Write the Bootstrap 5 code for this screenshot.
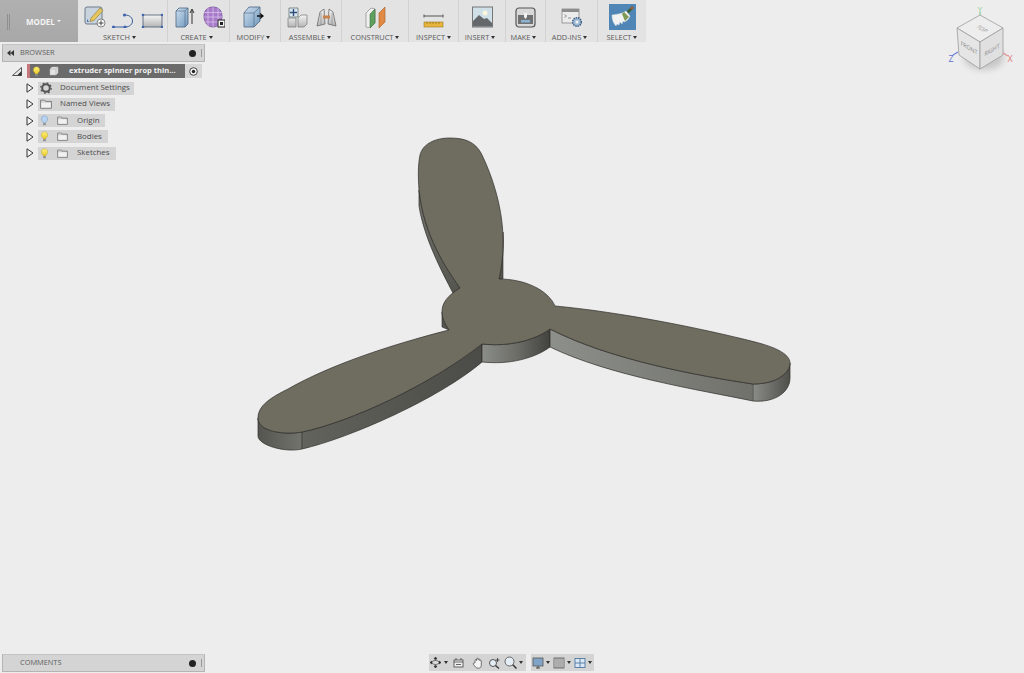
<!DOCTYPE html>
<html lang="en">
<head>
  <meta charset="UTF-8" />
  <meta name="viewport" content="width=device-width, initial-scale=1" />
  <title>Fusion 360 - extruder spinner prop</title>
  <link href="https://cdn.jsdelivr.net/npm/bootstrap@5.3.3/dist/css/bootstrap.min.css" rel="stylesheet" />
  <style>
    body {
      background: #ededed;
      font-family: "Open Sans", "Liberation Sans", sans-serif;
      color: #555;
      overflow: hidden;
    }

    .app { height: 673px; }

    /* toolbar */
    .toolbar { width: 646px; height: 42px; background: #e3e3e3; }
    .mode-tab {
      width: 78px;
      background: linear-gradient(#b0b0b0, #a8a8a8);
      color: #f4f4f4;
      font-size: 8px;
      font-weight: 700;
      padding-left: 26px;
      padding-top: 1px;
    }
    .mode-tab .grip { width: 3px; height: 16px; border-left: 1px solid #8f8f8f; border-right: 1px solid #8f8f8f; margin-left: -19px; margin-right: 16px; }
    .tool-group { border-right: 1px solid #d2d2d2; height: 42px; padding-top: 4px; }
    .tool-group:last-child { border-right: 0; }
    .tool-icons { height: 27px; }
    .tool-label { font-size: 7.4px; line-height: 10px; color: #595959; white-space: nowrap; margin-top: 1px; }
    .tool-label.dropdown-toggle::after { margin-left: 2px; vertical-align: 1px; border-top-width: 3px; border-left-width: 2px; border-right-width: 2px; color: #333; }
    .w-sketch { width: 90px; padding-right: 6px; }
    .w-sketch .tool-icons { margin-left: 7px; gap: 5px; }
    .w-create { width: 62px; padding-right: 4px; }
    .w-create .tool-icons { margin-left: 6px; }
    .w-modify { width: 51px; padding-right: 3px; }
    .w-assemble { width: 61px; padding-right: 2px; }
    .w-assemble .tool-icons { margin-left: 4px; }
    .w-construct { width: 67px; }
    .w-inspect { width: 50px; }
    .w-insert { width: 47px; padding-right: 4px; }
    .w-insert .tool-icons, .w-make .tool-icons { margin-left: 4px; }
    .w-make { width: 40px; padding-right: 4px; }
    .w-addins { width: 52px; padding-right: 4px; }
    .w-addins .tool-icons { margin-left: 5px; }
    .w-select { width: 48px; }
    .selected-tool { width: 27px; height: 26px; background: #4f86b5; }

    /* browser panel */
    .side-panel { width: 203px; margin-left: 2px; }
    .panel-head {
      height: 18px;
      background: #d4d4d4;
      border: 1px solid #b4b4b4;
      border-top-color: #c4c4c4;
      font-size: 7.4px;
      color: #5e5e5e;
      padding: 0 2px 0 4px;
    }
    .browser-head { margin-top: 2px; }
    .browser-title { margin-left: 6px; }
    .panel-head .dot { width: 7px; height: 7px; border-radius: 50%; background: #222; }
    .panel-head .handle { width: 1px; height: 8px; background: #999; margin-left: 5px; }
    .tree { margin-top: 1px; font-size: 7.9px; color: #4d4d4d; }
    .tree-root { height: 16px; margin-left: 10px; margin-top: 1px; margin-bottom: 1px; }
    .root-chip { width: 158px; height: 14px; background: #6b6b6b; border-left: 3px solid #c5757c; color: #f2f2f2; font-weight: 700; margin-left: 5px; padding-left: 2px; }
    .root-chip .name { margin-left: 10px; font-size: 7.5px; white-space: nowrap; }
    .root-end { width: 17px; height: 14px; background: #d6d6d6; }
    .tree-item { height: 16.25px; margin-left: 24px; }
    .chip { height: 13px; background: #d4d4d4; margin-left: 4px; padding-left: 2px; }
    .chip span { white-space: nowrap; }
    .w-doc { width: 96px; } .w-views { width: 77px; } .w-origin { width: 67px; } .w-bodies { width: 70px; } .w-sketches { width: 78px; }
    .label-far { margin-left: 8px; }
    .label-near { margin-left: 9px; }

    /* bottom bar */
    .bottom-row { height: 17px; margin-bottom: 2px; }
    .nav-seg { height: 17px; background: #d4d4d4; }
    .nav-one { width: 97px; margin-left: 224px; }
    .nav-two { width: 63px; margin-left: 5px; padding-left: 1px; }
    .mini-caret { width: 0; height: 0; border-top: 3px solid #333; border-left: 2px solid transparent; border-right: 2px solid transparent; margin: 0 3px 0 2px; }
    .comments-label { margin-left: 13px; }
    .cam-gap { margin-left: 2px; }

    /* free canvas */
    .model { position: absolute; left: 0; top: 0; width: 1024px; height: 673px; pointer-events: none; }
    svg { display: block; flex: none; }
  </style>
</head>
<body>

<!-- shared icons -->
<svg width="0" height="0" class="position-absolute">
  <defs>
    <linearGradient id="bulbY" x1="0" y1="0" x2="0" y2="1"><stop offset="0" stop-color="#fff27a"/><stop offset="1" stop-color="#e8c92c"/></linearGradient>
    <linearGradient id="boxBlue" x1="0" y1="0" x2="1" y2="1"><stop offset="0" stop-color="#cfe0ef"/><stop offset="1" stop-color="#6f97bd"/></linearGradient>
    <linearGradient id="grayBox" x1="0" y1="0" x2="0" y2="1"><stop offset="0" stop-color="#f4f4f4"/><stop offset="1" stop-color="#b5b5b5"/></linearGradient>
    <linearGradient id="sideLeft" gradientUnits="userSpaceOnUse" x1="258" y1="0" x2="482" y2="0"><stop offset="0" stop-color="#555550"/><stop offset=".19" stop-color="#72726c"/><stop offset=".197" stop-color="#63635d"/><stop offset="1" stop-color="#4b4b47"/></linearGradient>
    <linearGradient id="sideHub" gradientUnits="userSpaceOnUse" x1="482" y1="0" x2="550" y2="0"><stop offset="0" stop-color="#8b8d88"/><stop offset=".5" stop-color="#6d6e68"/><stop offset="1" stop-color="#42423e"/></linearGradient>
    <linearGradient id="sideRight" gradientUnits="userSpaceOnUse" x1="550" y1="0" x2="790" y2="0"><stop offset="0" stop-color="#8d8f8a"/><stop offset=".84" stop-color="#70716b"/><stop offset=".846" stop-color="#8a8c87"/><stop offset="1" stop-color="#4f4f4a"/></linearGradient>
    <linearGradient id="sideTop" x1="0" y1="0" x2="0" y2="1"><stop offset="0" stop-color="#75756e"/><stop offset="1" stop-color="#55554f"/></linearGradient>
    <filter id="soft" x="-40%" y="-40%" width="180%" height="180%"><feGaussianBlur stdDeviation="3"/></filter>
    <symbol id="bulbOn" viewBox="0 0 10 12"><path d="M5 .7a3.600 3.600 0 0 0-2 6.600c.4.4.6.9.6 1.400h2.800c0-.5.2-1 .6-1.400A3.600 3.600 0 0 0 5 .7z" fill="url(#bulbY)" stroke="#b89f2a" stroke-width=".5"/><rect x="3.600" y="9" width="2.800" height="2.200" fill="#8b8b8b"/></symbol>
    <symbol id="bulbOff" viewBox="0 0 10 12"><path d="M5 .7a3.600 3.600 0 0 0-2 6.600c.4.4.6.9.6 1.400h2.800c0-.5.2-1 .6-1.400A3.600 3.600 0 0 0 5 .7z" fill="#b6d3f2" stroke="#6f90b5" stroke-width=".5"/><rect x="3.600" y="9" width="2.800" height="2.200" fill="#8b8b8b"/></symbol>
    <symbol id="folder" viewBox="0 0 12 10"><path d="M.6 1.200h4l1 1.200h5.800v6.900H.6z" fill="#f1f1f1" stroke="#555" stroke-width=".7"/><path d="M.6 3h10.800" stroke="#888" stroke-width=".5"/></symbol>
    <symbol id="expand" viewBox="0 0 8 10"><path d="M1 .8 7 5 1 9.200z" fill="#f4f4f4" stroke="#333" stroke-width="1"/></symbol>
  </defs>
</svg>

<div class="app d-flex flex-column position-relative">

  <div class="toolbar d-flex">
    <div class="mode-tab d-flex align-items-center">
      <div class="grip"></div>
      <span class="dropdown-toggle">MODEL</span>
    </div>

    <div class="tool-group w-sketch d-flex flex-column align-items-center">
      <div class="tool-icons d-flex">
        <svg width="22" height="24" viewBox="0 0 22 24"><rect x="1" y="3" width="17" height="17" rx="2" fill="#c9d3dd" stroke="#6c7a88"/><path d="M3 18V15l2 3z" fill="#3f6db0"/><path d="M7 14 16 4l3 2.500-9 10-4 1z" fill="#e6c65a" stroke="#8d7a35" stroke-width=".6"/><circle cx="17" cy="19" r="4" fill="#fff" stroke="#555" stroke-width=".7"/><path d="M17 16.500v5M14.500 19h5" stroke="#444"/></svg>
        <svg width="25" height="24" viewBox="0 0 25 24"><path d="M3 23H14c10 0 10-12 0-12" fill="none" stroke="#3a5f9c" stroke-width="1"/><circle cx="2.500" cy="23" r="1.600" fill="#3f66ad"/><circle cx="14" cy="23" r="1.600" fill="#3f66ad"/><circle cx="13.500" cy="11" r="1.600" fill="#3f66ad"/></svg>
        <svg width="22" height="24" viewBox="0 0 22 24"><rect x="2" y="11" width="19" height="12" fill="url(#grayBox)" stroke="#4d5a70" stroke-width=".8"/><g fill="#3f66ad"><circle cx="2" cy="11" r="1.300"/><circle cx="21" cy="11" r="1.300"/><circle cx="2" cy="23" r="1.300"/><circle cx="21" cy="23" r="1.300"/></g></svg>
      </div>
      <div class="tool-label dropdown-toggle">SKETCH</div>
    </div>

    <div class="tool-group w-create d-flex flex-column align-items-center">
      <div class="tool-icons d-flex gap-2">
        <svg width="20" height="24" viewBox="0 0 20 24"><path d="M1 7 4 4h9v16l-3 3H1z" fill="url(#boxBlue)" stroke="#4d6580" stroke-width=".8"/><path d="M10 7v16M1 7h9l3-3" fill="none" stroke="#4d6580" stroke-width=".6"/><path d="M17 20V6m-2 3 2-4 2 4" fill="none" stroke="#333" stroke-width="1"/></svg>
        <svg width="22" height="24" viewBox="0 0 22 24"><path d="M1 12C1 5 6 3 10 3s9 2 9 9-4 11-9 11-9-4-9-11z" fill="#a77bc9" stroke="#6f4c93" stroke-width=".7"/><path d="M1 8.500h18M1 13h18M2 18h16M5 4v18M10 3v20M15 4v18" stroke="#e6d6f3" stroke-width=".6"/><rect x="15" y="16" width="7" height="7" fill="#f4f4f4" stroke="#222"/><rect x="17" y="18" width="3" height="3" fill="#222"/></svg>
      </div>
      <div class="tool-label dropdown-toggle">CREATE</div>
    </div>

    <div class="tool-group w-modify d-flex flex-column align-items-center">
      <div class="tool-icons">
        <svg width="22" height="24" viewBox="0 0 22 24"><path d="M1 9 6 3h11v14l-6 6H1z" fill="url(#boxBlue)" stroke="#4d6580" stroke-width=".8"/><path d="M11 9v14M1 9h10l6-6" fill="none" stroke="#4d6580" stroke-width=".6"/><path d="M14 12h5m-2-2.500 3 2.500-3 2.500" fill="none" stroke="#111" stroke-width="1.300"/></svg>
      </div>
      <div class="tool-label dropdown-toggle">MODIFY</div>
    </div>

    <div class="tool-group w-assemble d-flex flex-column align-items-center">
      <div class="tool-icons d-flex gap-2">
        <svg width="21" height="24" viewBox="0 0 21 24"><path d="M1 14h8v9H1zM11 14l3-3h6v9l-3 3h-6z" fill="url(#grayBox)" stroke="#777" stroke-width=".7"/><path d="M2 4h9v9H2z" fill="#dbe7f2" stroke="#566" stroke-width=".7"/><path d="M6.500 5v7M3 8.500h7" stroke="#2c4e78" stroke-width="1.400"/></svg>
        <svg width="21" height="24" viewBox="0 0 21 24"><path d="M1 22 4 8l4-3 1 15zM12 20l1-15 4 3 3 14z" fill="url(#grayBox)" stroke="#6b6b6b" stroke-width=".8"/><path d="M7 13h7" stroke="#c9824a" stroke-width="3"/><path d="M5 9v12M16 9v12" stroke="#888" stroke-width=".6"/></svg>
      </div>
      <div class="tool-label dropdown-toggle">ASSEMBLE</div>
    </div>

    <div class="tool-group w-construct d-flex flex-column align-items-center">
      <div class="tool-icons">
        <svg width="23" height="24" viewBox="0 0 23 24"><path d="M2 9 7 4l4 1v14l-5 5-4-1z" fill="#f0f0f0" stroke="#777" stroke-width=".6"/><path d="M6 10 11 5v14l-5 5z" fill="#5fa05f" stroke="#3e6f3e" stroke-width=".6"/><path d="M15 9l6-6v15l-6 6z" fill="#e08a45" stroke="#a55f28" stroke-width=".6"/></svg>
      </div>
      <div class="tool-label dropdown-toggle">CONSTRUCT</div>
    </div>

    <div class="tool-group w-inspect d-flex flex-column align-items-center">
      <div class="tool-icons">
        <svg width="21" height="24" viewBox="0 0 21 24"><path d="M1 12h19M1 10.500v3M20 10.500v3" stroke="#555" stroke-width="1" fill="none"/><rect x="1" y="18" width="19" height="5" fill="#e7b53c" stroke="#9c7a22" stroke-width=".6"/><path d="M4 18v2M7 18v2M10 18v2M13 18v2M16 18v2" stroke="#7d6119" stroke-width=".6"/></svg>
      </div>
      <div class="tool-label dropdown-toggle">INSPECT</div>
    </div>

    <div class="tool-group w-insert d-flex flex-column align-items-center">
      <div class="tool-icons">
        <svg width="21" height="24" viewBox="0 0 21 24"><rect x=".5" y="3" width="20" height="20" fill="#cfe0e8" stroke="#777"/><circle cx="13" cy="9" r="2.500" fill="#fbf7dd"/><path d="M1 22.500V17l6-6 5 4 3-1 5 5v3.500z" fill="#65686a"/></svg>
      </div>
      <div class="tool-label dropdown-toggle">INSERT</div>
    </div>

    <div class="tool-group w-make d-flex flex-column align-items-center">
      <div class="tool-icons">
        <svg width="21" height="24" viewBox="0 0 21 24"><rect x="1" y="4" width="19" height="19" rx="3" fill="#d8d8d8" stroke="#555" stroke-width="1.200"/><rect x="3" y="11" width="15" height="9" fill="#6f7173"/><path d="M9 9h3v4l-1.500 2L9 13z" fill="#f2f2f2"/><rect x="6" y="16" width="9" height="2.500" fill="#8ab3d4"/></svg>
      </div>
      <div class="tool-label dropdown-toggle">MAKE</div>
    </div>

    <div class="tool-group w-addins d-flex flex-column align-items-center">
      <div class="tool-icons">
        <svg width="22" height="24" viewBox="0 0 22 24"><rect x="1" y="5" width="17" height="14" fill="#ececec" stroke="#7a7a7a" stroke-width=".7"/><rect x="1" y="5" width="17" height="3" fill="#8c8c8c"/><path d="M3.500 10.500 5.500 12l-2 1.500M7 14h3" fill="none" stroke="#555" stroke-width=".6"/><circle cx="16" cy="18" r="4.300" fill="#9cb9d6" stroke="#3f5f82" stroke-width="1.500" stroke-dasharray="1.500 .8"/><circle cx="16" cy="18" r="1.600" fill="#f2f2f2"/></svg>
      </div>
      <div class="tool-label dropdown-toggle">ADD-INS</div>
    </div>

    <div class="tool-group w-select d-flex flex-column align-items-center">
      <div class="tool-icons">
        <div class="selected-tool">
          <svg width="27" height="26" viewBox="0 0 27 26"><path d="M16 11 24 3" stroke="#3e5f35" stroke-width="2.500"/><path d="M22 5l2-2" stroke="#b05a3a" stroke-width="2"/><path d="M3 11c6-1 10-1 14-4l4 5c-1 3-3 5-6 6l-1-1-1 3-2-2-1 3-2-1-1 2C4 19 3 15 3 11z" fill="#f2f2f2" stroke="#d5dbe0" stroke-width=".5"/><path d="M15 8l5 5-4 4-3-7z" fill="#7c9a55"/></svg>
        </div>
      </div>
      <div class="tool-label dropdown-toggle">SELECT</div>
    </div>
  </div>

  <div class="flex-grow-1">
    <div class="side-panel">
      <div class="panel-head browser-head d-flex align-items-center">
        <svg width="7" height="6" viewBox="0 0 7 6"><path d="M3.500 0v6L0 3zM7 0v6L3.500 3z" fill="#333"/></svg>
        <span class="browser-title flex-grow-1">BROWSER</span>
        <div class="dot"></div><div class="handle"></div>
      </div>

      <div class="tree">
        <div class="tree-root d-flex align-items-center">
          <svg width="10" height="9" viewBox="0 0 10 9"><path d="M9.500.5v8H.5z" fill="#e6e6e6" stroke="#333" stroke-width=".8"/><path d="M9.500 4v4.500H5z" fill="#333"/></svg>
          <div class="root-chip d-flex align-items-center">
            <svg width="9" height="11"><use href="#bulbOn"/></svg>
            <svg width="10" height="10" viewBox="0 0 10 10" class="ms-2"><path d="M1 3 3 1h6v6L7 9H1z" fill="#e4e4e4" stroke="#bbb" stroke-width=".5"/><path d="M7 3v6M1 3h6l2-2" fill="none" stroke="#9a9a9a" stroke-width=".5"/></svg>
            <span class="name">extruder spinner prop thin...</span>
          </div>
          <div class="root-end d-flex align-items-center justify-content-center">
            <svg width="9" height="9" viewBox="0 0 9 9"><circle cx="4.500" cy="4.500" r="3.800" fill="#f4f4f4" stroke="#333" stroke-width=".9"/><circle cx="4.500" cy="4.500" r="1.700" fill="#222"/></svg>
          </div>
        </div>

        <div class="tree-item d-flex align-items-center">
          <svg width="8" height="10"><use href="#expand"/></svg>
          <div class="chip w-doc d-flex align-items-center">
            <svg width="12" height="12" viewBox="0 0 12 12"><circle cx="6" cy="6" r="3.800" fill="none" stroke="#555" stroke-width="2"/><circle cx="6" cy="6" r="5.200" fill="none" stroke="#555" stroke-width="1.300" stroke-dasharray="1.800 2.280"/></svg>
            <span class="label-far">Document Settings</span>
          </div>
        </div>
        <div class="tree-item d-flex align-items-center">
          <svg width="8" height="10"><use href="#expand"/></svg>
          <div class="chip w-views d-flex align-items-center">
            <svg width="12" height="10"><use href="#folder"/></svg>
            <span class="label-far">Named Views</span>
          </div>
        </div>
        <div class="tree-item d-flex align-items-center">
          <svg width="8" height="10"><use href="#expand"/></svg>
          <div class="chip w-origin d-flex align-items-center">
            <svg width="9" height="11"><use href="#bulbOff"/></svg>
            <svg width="11" height="9" class="ms-2"><use href="#folder"/></svg>
            <span class="label-near">Origin</span>
          </div>
        </div>
        <div class="tree-item d-flex align-items-center">
          <svg width="8" height="10"><use href="#expand"/></svg>
          <div class="chip w-bodies d-flex align-items-center">
            <svg width="9" height="11"><use href="#bulbOn"/></svg>
            <svg width="11" height="9" class="ms-2"><use href="#folder"/></svg>
            <span class="label-near">Bodies</span>
          </div>
        </div>
        <div class="tree-item d-flex align-items-center">
          <svg width="8" height="10"><use href="#expand"/></svg>
          <div class="chip w-sketches d-flex align-items-center">
            <svg width="9" height="11"><use href="#bulbOn"/></svg>
            <svg width="11" height="9" class="ms-2"><use href="#folder"/></svg>
            <span class="label-near">Sketches</span>
          </div>
        </div>
      </div>
    </div>
  </div>

  <div class="bottom-row d-flex">
    <div class="side-panel">
      <div class="panel-head d-flex align-items-center">
        <span class="comments-label flex-grow-1">COMMENTS</span>
        <div class="dot"></div><div class="handle"></div>
      </div>
    </div>
    <div class="nav-seg nav-one d-flex align-items-center">
      <svg width="13" height="13" viewBox="0 0 13 13"><path d="M6.500 1v11M1 6.500h11M6.500 1 5 3h3zM6.500 12 5 10h3zM1 6.500 3 5v3zM12 6.500 10 5v3z" fill="#333" stroke="#333" stroke-width=".7"/><ellipse cx="6.500" cy="6.500" rx="3.500" ry="2" fill="#ddd" stroke="#333" stroke-width=".6"/></svg>
      <div class="mini-caret"></div>
      <svg width="11" height="11" viewBox="0 0 11 11" class="cam-gap"><rect x="1" y="3" width="9" height="7" fill="#eee" stroke="#444" stroke-width=".8"/><path d="M1 5h9M3 1v2M8 1v2M3 7.500h5" stroke="#444" stroke-width=".8"/></svg>
      <svg width="12" height="12" viewBox="0 0 12 12" class="ms-2"><path d="M3 6V3.500a.8.8 0 0 1 1.600 0V2a.8.8 0 0 1 1.600 0v.8a.8.8 0 0 1 1.600 0v1a.8.8 0 0 1 1.500 0V8c0 2-1 3.200-3 3.200-2.500 0-3-1.500-5-4-.5-.9.700-1.500 1.700-1.200z" fill="#f4f4f4" stroke="#444" stroke-width=".7"/></svg>
      <svg width="12" height="12" viewBox="0 0 12 12" class="ms-1"><circle cx="5" cy="6" r="3.500" fill="#e6eef5" stroke="#555"/><path d="M7.500 8.500 11 11.500" stroke="#333" stroke-width="1.300"/><path d="M9.500 1v4M7.500 3h4" stroke="#333" stroke-width=".8"/></svg>
      <svg width="13" height="13" viewBox="0 0 13 13" class="ms-1"><circle cx="5.500" cy="5.500" r="4.500" fill="#e6eef5" stroke="#666"/><path d="M8.800 8.800 12.500 12.500" stroke="#333" stroke-width="1.500"/></svg>
      <div class="mini-caret"></div>
    </div>
    <div class="nav-seg nav-two d-flex align-items-center">
      <svg width="12" height="12" viewBox="0 0 12 12"><rect x="1" y="1" width="10" height="8" fill="#7fa4c7" stroke="#555" stroke-width=".8"/><path d="M4 11h4M6 9v2" stroke="#444"/></svg>
      <div class="mini-caret"></div>
      <svg width="12" height="12" viewBox="0 0 12 12"><rect x="1" y="1" width="10" height="10" fill="#ddd" stroke="#555" stroke-width=".8"/><path d="M3 1v10M5 1v10M7 1v10M9 1v10" stroke="#666" stroke-width=".8"/></svg>
      <div class="mini-caret"></div>
      <svg width="12" height="12" viewBox="0 0 12 12"><rect x="1" y="1.500" width="10" height="9" fill="#dbe7f2" stroke="#4f78a5" stroke-width=".9"/><path d="M6 1.500v9M1 6h10" stroke="#4f78a5" stroke-width=".9"/></svg>
      <div class="mini-caret"></div>
    </div>
  </div>

  <!-- the part on the canvas -->
  <svg class="model" viewBox="0 0 1024 673">
    <!-- side walls -->
    <path d="M419 190V206C424 238 442 272 453 293L460 288C446 268 424 236 419 190Z" fill="url(#sideTop)" stroke="#2c2c2a" stroke-width=".7"/>
    <path d="M503 232C504 250 502 265 499 279L503 279Z" fill="#55554f" stroke="#2c2c2a" stroke-width=".6"/>
    <path d="M442 312 442 327 449 330Z" fill="#55554f" stroke="#2c2c2a" stroke-width=".6"/>
    <path d="M258 418V436C258 445 285 453 302 449 350 438 440 398 482 362V344C430 385 350 422 302 432 285 435 258 432 258 418Z" fill="url(#sideLeft)" stroke="#2e2d2a" stroke-width=".7"/>
    <path d="M482 344V362C510 365 535 358 550 347V329C535 340 510 347 482 344Z" fill="url(#sideHub)" stroke="#2e2d2a" stroke-width=".7"/>
    <path d="M550 329V347C610 376 700 390 753 401 775 403 790 392 790 378V363C790 372 778 384 753 384 700 376 610 360 550 329Z" fill="url(#sideRight)" stroke="#2e2d2a" stroke-width=".7"/>

    <!-- top face -->
    <path d="M460 288C446 268 424 236 419 190 418 175 418 165 420 155 422 146 432 138 450 138 465 138 475 142 481 153 492 175 504 210 503 245 503 258 501 270 499 279 525 279 548 290 555 306 620 312 700 328 755 342 775 347 790 354 790 363 790 372 778 384 753 384 700 376 610 360 550 329 535 340 510 347 482 344 430 385 350 422 302 432 285 435 258 432 258 418 258 405 272 397 288 389 330 365 390 345 449 330 445 324 442 318 442 312 442 303 447 296 460 288Z" fill="#6f6c60" stroke="#2e2d2a" stroke-width=".7" stroke-linejoin="round"/>
    <path d="M302 432V449M753 384V401" stroke="#3a3a36" stroke-width=".7"/>

    <!-- view cube -->
    <ellipse cx="984" cy="58" rx="20" ry="12" fill="#a9a9a9" opacity=".55" filter="url(#soft)"/>
    <path d="M980 15 1003 28 980 42 957 28Z" fill="#ededed" stroke="#9c9c9c" stroke-width=".8"/>
    <path d="M957 28 980 42 980 69 959 55Z" fill="#e5e5e5" stroke="#9c9c9c" stroke-width=".8"/>
    <path d="M1003 28 980 42 980 69 1003 55Z" fill="#e0e0e0" stroke="#9c9c9c" stroke-width=".8"/>
    <path d="M980 15V12" stroke="#7fcf8f" stroke-width="1.200"/>
    <path d="M958 52 953 55" stroke="#6f7fd8" stroke-width="1.200"/>
    <path d="M1003 53 1008 56" stroke="#e58f8f" stroke-width="1.200"/>
    <g font-family="Open Sans, Liberation Sans, sans-serif" text-anchor="middle">
      <text x="980" y="12" font-size="8" fill="#7fcf8f">Y</text>
      <text x="951" y="62" font-size="9" fill="#5f6fd0">Z</text>
      <text x="1010" y="62" font-size="9" fill="#e07a7a">X</text>
      <text transform="translate(980 30) rotate(30) skewX(-30)" font-size="5.500" fill="#8c8c8c">TOP</text>
      <text transform="matrix(.87 .5 0 1 969 50)" font-size="6" fill="#8c8c8c">FRONT</text>
      <text transform="matrix(.87 -.5 0 1 992 52)" font-size="6" fill="#8c8c8c">RIGHT</text>
    </g>
  </svg>
</div>

<script src="https://cdn.jsdelivr.net/npm/bootstrap@5.3.3/dist/js/bootstrap.bundle.min.js"></script>
</body>
</html>
